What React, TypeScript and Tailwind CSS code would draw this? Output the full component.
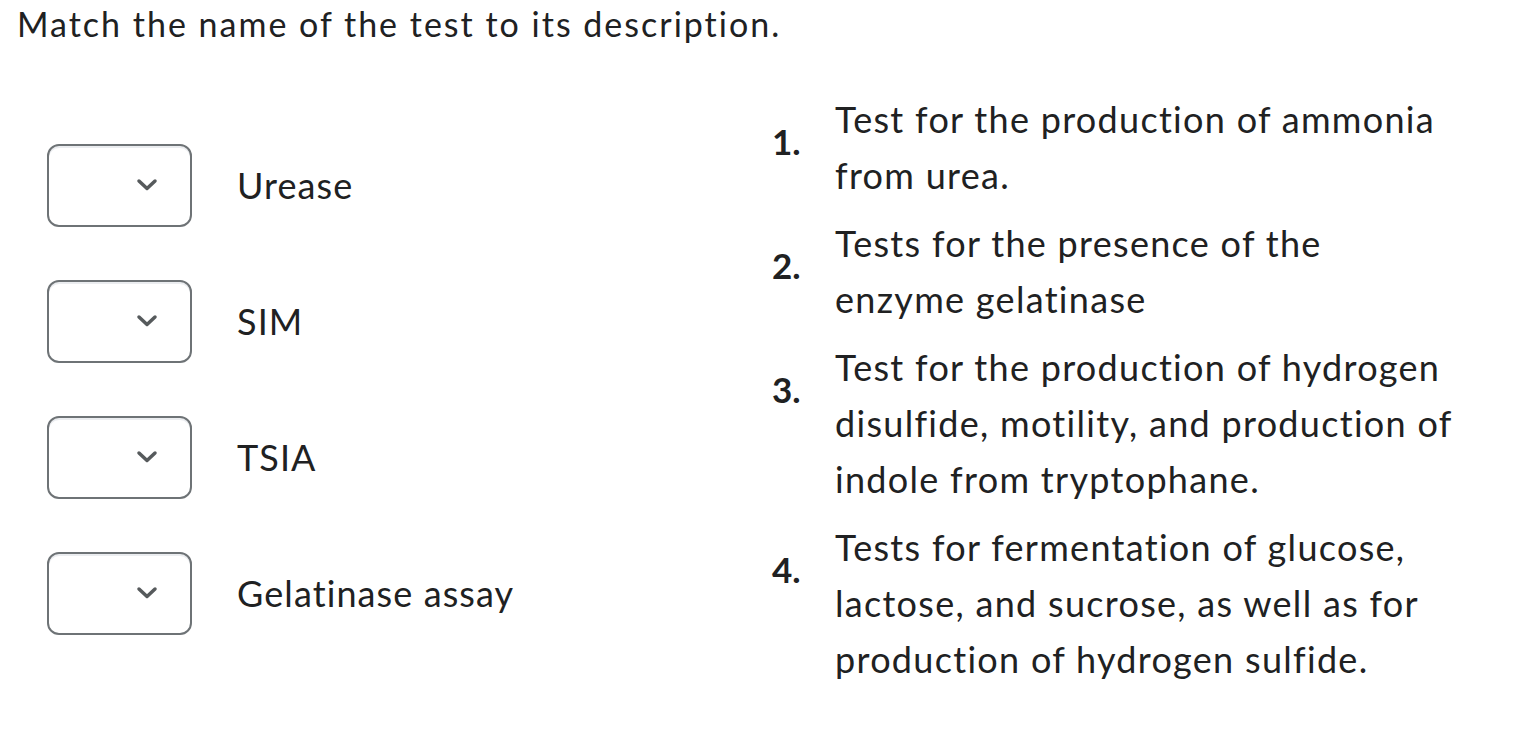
import React from "react";

const items = ["Urease", "SIM", "TSIA", "Gelatinase assay"];
const descs = [
  ["Test for the production of ammonia", "from urea."],
  ["Tests for the presence of the", "enzyme gelatinase"],
  ["Test for the production of hydrogen", "disulfide, motility, and production of", "indole from tryptophane."],
  ["Tests for fermentation of glucose,", "lactose, and sucrose, as well as for", "production of hydrogen sulfide."],
];

function Chevron() {
  return (
    <svg width="22" height="14" viewBox="0 0 22 14" className="block">
      <path d="M3 3 L11 10.5 L19 3" fill="none" stroke="#565a5c" strokeWidth="3.5" strokeLinecap="round" strokeLinejoin="round" />
    </svg>
  );
}

export default function App() {
  return (
    <div className="w-[1540px] h-[734px] bg-white text-[#202122] [font-variant-ligatures:none]" style={{ fontFamily: "Lato, 'Noto Sans', sans-serif" }}>
      <div className="pl-[17px] pt-[4px] text-[34px] leading-[1.2] tracking-[2px]">Match the name of the test to its description.</div>
      <div className="flex">
        <div className="pl-[47px] pt-[99px] flex flex-col gap-[53px] w-[770px] shrink-0">
          {items.map((t) => (
            <div key={t} className="flex items-center">
              <div className="w-[145px] h-[83px] rounded-[12px] border-2 border-[#6e7376] shadow-[inset_0_2px_0_0_rgba(177,185,195,0.25)] flex items-center justify-end pr-[32px]">
                <Chevron />
              </div>
              <div className="ml-[45px] text-[36px] tracking-[1.1px]">{t}</div>
            </div>
          ))}
        </div>
        <div className="pt-[46px] flex flex-col gap-[12px]">
          {descs.map((lines, i) => (
            <div key={i} className="flex">
              <div className="w-[65px] pl-[2px] mt-[22px] text-[35px] font-bold leading-[56px]">{i + 1}.</div>
              <div className="text-[36px] leading-[56px] tracking-[1.3px] whitespace-nowrap">
                {lines.map((l) => (
                  <div key={l}>{l}</div>
                ))}
              </div>
            </div>
          ))}
        </div>
      </div>
    </div>
  );
}
